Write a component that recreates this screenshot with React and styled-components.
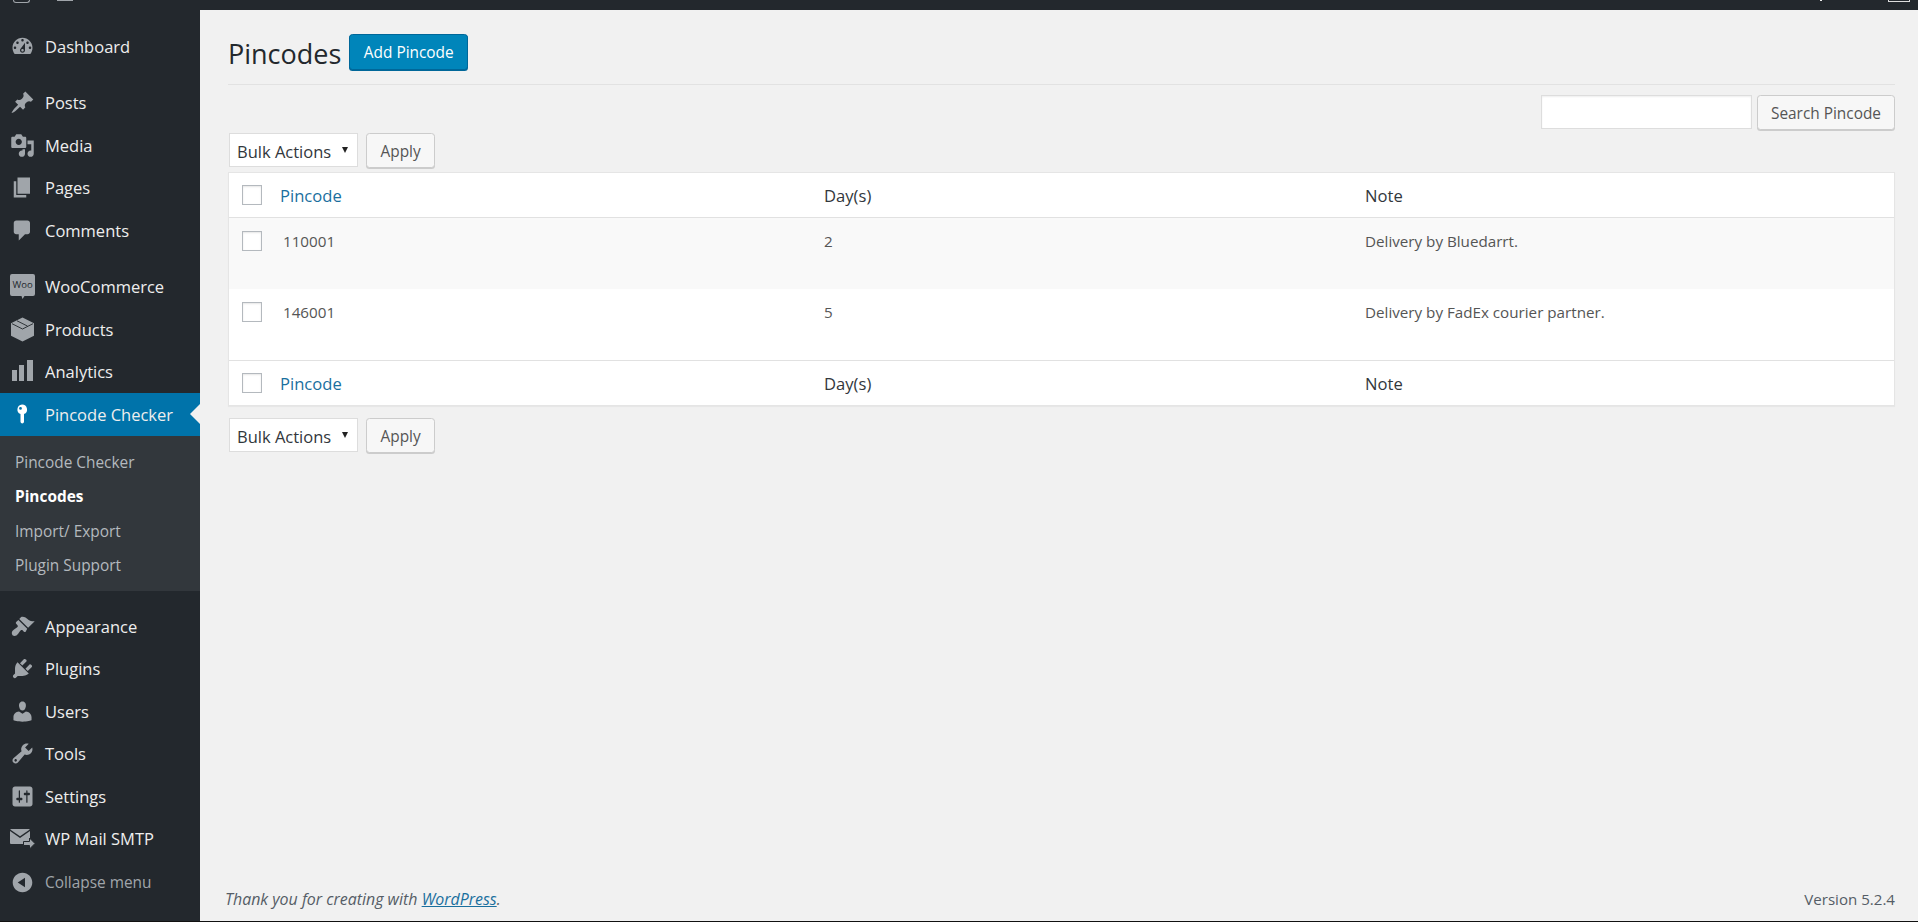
import React from "react";
import styled, { createGlobalStyle } from "styled-components";

const GlobalStyle = createGlobalStyle`
  html, body {
    margin: 0;
    padding: 0;
    background: #f1f1f1;
  }
  * {
    box-sizing: border-box;
  }
`;

const FONT = `"Open Sans", "Noto Sans", sans-serif`;

const Page = styled.div`
  display: flex;
  flex-direction: column;
  width: 1918px;
  height: 922px;
  overflow: hidden;
  font-family: ${FONT};
  border-bottom: 1px solid #111;
`;

const TopBar = styled.div`
  display: flex;
  align-items: flex-start;
  flex: 0 0 10px;
  background: #23282d;
`;
const TopArc = styled.span`
  width: 17px;
  height: 3px;
  margin-left: 13px;
  border: 1px solid #a0a5aa;
  border-top: none;
  border-radius: 0 0 8px 8px;
`;
const TopBlock = styled.span`
  width: 16px;
  height: 1px;
  margin-left: 27px;
  background: #a0a5aa;
`;
const TopTick = styled.span`
  width: 2px;
  height: 1px;
  margin-left: auto;
  background: #eee;
`;
const TopBox = styled.span`
  width: 22px;
  height: 2px;
  margin: 0 8px 0 66px;
  border: 1px solid #ddd;
  border-top: none;
`;

const Body = styled.div`
  display: flex;
  flex: 1;
  min-height: 0;
`;

const Sidebar = styled.nav`
  display: flex;
  flex-direction: column;
  flex: 0 0 200px;
  padding-top: 15px;
  background: #23282d;
`;
const MenuItem = styled.div`
  position: relative;
  display: flex;
  align-items: center;
  height: 42.5px;
  flex: none;
  margin-top: ${(p) => (p.$gap ? p.$gap : 0)}px;
  background: ${(p) => (p.$active ? "#0073aa" : "transparent")};
  color: ${(p) => (p.$muted ? "#a0a5aa" : "#eee")};
  font-size: ${(p) => (p.$muted ? "15.4px" : "16.5px")};
`;
const IconSlot = styled.span`
  display: flex;
  justify-content: center;
  align-items: center;
  flex: 0 0 45px;
  color: ${(p) => (p.$active ? "#fff" : "#a0a5aa")};
  svg {
    display: block;
    width: 25px;
    height: 25px;
    fill: currentColor;
  }
`;
const ActiveNotch = styled.span`
  position: absolute;
  right: 0;
  top: 50%;
  margin-top: -10px;
  border: 10px solid transparent;
  border-left: none;
  border-right-color: #f1f1f1;
`;
const SubMenu = styled.div`
  display: flex;
  flex-direction: column;
  flex: none;
  height: 155.5px;
  padding: 10px 0 0 15px;
  background: #32373c;
`;
const SubItem = styled.div`
  height: 34.5px;
  line-height: 34.5px;
  font-size: 15.4px;
  font-weight: ${(p) => (p.$current ? 700 : 400)};
  color: ${(p) => (p.$current ? "#fff" : "#b4b9be")};
`;

const Main = styled.main`
  display: flex;
  flex-direction: column;
  flex: 1;
  min-width: 0;
  padding: 24px 23px 0 28px;
`;
const Heading = styled.div`
  display: flex;
  align-items: flex-start;
  gap: 8px;
  height: 51px;
  border-bottom: 1px solid #e2e2e2;
`;
const Title = styled.h1`
  margin: 0;
  font-size: 27px;
  font-weight: 400;
  line-height: 39px;
  color: #23282d;
`;
const Button = styled.button`
  height: 35px;
  padding: ${(p) => p.$top || 2}px ${(p) => p.$pad || 13}px 0;
  border: 1px solid #ccc;
  border-radius: 3.5px;
  background: #f7f7f7;
  box-shadow: 0 1px 0 #ccc;
  color: #555;
  font-family: ${FONT};
  font-size: 15.4px;
  line-height: 30px;
  white-space: nowrap;
`;
const PrimaryButton = styled(Button)`
  height: 36px;
  border-color: #006799;
  background: #0085ba;
  box-shadow: 0 1px 0 #006799;
  color: #fff;
`;
const SearchRow = styled.div`
  display: flex;
  justify-content: flex-end;
  gap: 5px;
  margin-top: 10px;
`;
const SearchInput = styled.input`
  width: 211px;
  height: 34px;
  border: 1px solid #ddd;
  background: #fff;
  box-shadow: inset 0 1px 2px rgba(0, 0, 0, 0.07);
  outline: none;
`;
const BulkRow = styled.div`
  display: flex;
  align-items: flex-start;
  gap: 8px;
  margin: ${(p) => p.$top}px 0 0 1px;
`;
const SelectWrap = styled.div`
  position: relative;
  width: 129px;
  height: 34px;
  &::after {
    content: "";
    position: absolute;
    top: 14px;
    right: 10px;
    border: 3.5px solid transparent;
    border-top: 6px solid #222;
    border-bottom: none;
  }
`;
const Select = styled.select`
  appearance: none;
  width: 100%;
  height: 100%;
  padding: 2px 0 0 7px;
  border: 1px solid #ddd;
  border-radius: 0;
  background: #fff;
  color: #32373c;
  font-family: ${FONT};
  font-size: 16.5px;
  outline: none;
`;

const Table = styled.table`
  width: 1667px;
  margin-top: 4px;
  border: 1px solid #e5e5e5;
  border-spacing: 0;
  background: #fff;
  box-shadow: 0 1px 1px rgba(0, 0, 0, 0.04);
  table-layout: fixed;
`;
const Col = styled.col`
  width: ${(p) => p.$width}px;
`;
const HeadCell = styled.th`
  height: 45px;
  padding: 0 10px;
  border-bottom: ${(p) => (p.$foot ? "none" : "1px solid #e1e1e1")};
  border-top: ${(p) => (p.$foot ? "1px solid #e1e1e1" : "none")};
  color: #32373c;
  font-size: 16.6px;
  font-weight: 400;
  text-align: left;
`;
const SortLink = styled.a`
  color: #1a6f9e;
`;
const Row = styled.tr`
  background: ${(p) => (p.$alt ? "#f9f9f9" : "#fff")};
`;
const Cell = styled.td`
  height: 71px;
  padding: ${(p) => (p.$check ? "13px 0 0 13px" : `13px 10px 0 ${p.$pad || 10}px`)};
  vertical-align: top;
  color: #555;
  font-size: 15.2px;
  line-height: 20px;
`;
const HeadCheckCell = styled(HeadCell)`
  padding: 0 0 0 13px;
`;
const Checkbox = styled.span`
  display: block;
  width: 20px;
  height: 20px;
  border: 1px solid #b4b9be;
  background: #fff;
  box-shadow: inset 0 1px 2px rgba(0, 0, 0, 0.1);
`;

const Footer = styled.footer`
  display: flex;
  justify-content: space-between;
  align-items: center;
  margin: auto 0 0 -3px;
  padding-bottom: 12px;
  color: #555d66;
  font-size: 15.1px;
  line-height: 20px;
`;
const Thanks = styled.i`
  font-size: 15.95px;
  a {
    color: #1a6f9e;
    text-decoration: underline;
  }
`;

const paths = {
  dashboard:
    "M3.76 16h12.48c1.1-1.37 1.76-3.11 1.76-5 0-4.42-3.58-8-8-8s-8 3.58-8 8c0 1.89.66 3.63 1.76 5zM10 4c.55 0 1 .45 1 1s-.45 1-1 1-1-.45-1-1 .45-1 1-1zM6 6c.55 0 1 .45 1 1s-.45 1-1 1-1-.45-1-1 .45-1 1-1zm8 0c.55 0 1 .45 1 1s-.45 1-1 1-1-.45-1-1 .45-1 1-1zm-5.37 5.55L12 7v6c0 1.1-.9 2-2 2s-2-.9-2-2c0-.57.24-1.08.63-1.45zM4 10c.55 0 1 .45 1 1s-.45 1-1 1-1-.45-1-1 .45-1 1-1zm12 0c.55 0 1 .45 1 1s-.45 1-1 1-1-.45-1-1 .45-1 1-1zm-5 3c0-.55-.45-1-1-1s-1 .45-1 1 .45 1 1 1 1-.45 1-1z",
  posts:
    "M10.44 3.02l1.82-1.82 6.36 6.35-1.83 1.82c-1.05-.68-2.48-.57-3.41.36l-.75.75c-.92.93-1.04 2.35-.35 3.41l-1.83 1.82-2.41-2.41-2.8 2.79c-.42.42-3.38 2.71-3.8 2.29s1.86-3.39 2.28-3.81l2.79-2.79L4.1 9.36l1.83-1.82c1.05.69 2.48.57 3.4-.36l.75-.75c.93-.92 1.05-2.35.36-3.41z",
  media:
    "M13 11V4c0-.55-.45-1-1-1h-1.67L9 1H5L3.67 3H2c-.55 0-1 .45-1 1v7c0 .55.45 1 1 1h10c.55 0 1-.45 1-1zM7 4.5c1.38 0 2.5 1.12 2.5 2.5S8.38 9.5 7 9.5 4.5 8.38 4.5 7 5.62 4.5 7 4.5zM14 6h5v10.5c0 1.38-1.12 2.5-2.5 2.5S14 17.88 14 16.5s1.12-2.5 2.5-2.5c.17 0 .34.02.5.05V9h-3V6zm-4 8.05V13h2v3.5c0 1.38-1.12 2.5-2.5 2.5S7 17.88 7 16.5 8.12 14 9.5 14c.17 0 .34.02.5.05z",
  pages: "M6 15V2h10v13H6zm-1 1h8v2H3V5h2v11z",
  comments:
    "M5 2h9c1.1 0 2 .9 2 2v7c0 1.1-.9 2-2 2h-2l-5 5v-5H5c-1.1 0-2-.9-2-2V4c0-1.1.9-2 2-2z",
  appearance:
    "M14.48 11.06L7.41 3.99l1.5-1.5c.5-.56 2.3-.47 3.51.32 1.21.8 1.43 1.28 2.91 2.1 1.18.64 2.45 1.26 4.45.85zm-.71.71L6.7 4.7 4.93 6.47c-.39.39-.39 1.02 0 1.41l1.06 1.06c.39.39.39 1.03 0 1.42-.6.6-1.43 1.11-2.21 1.69-.35.26-.7.53-1.01.84C1.43 13.71.96 15.65 2 17c1.35 1.04 3.29.57 4.11-.73.31-.31.58-.66.84-1.01.58-.78 1.09-1.61 1.69-2.21.39-.39 1.03-.39 1.42 0l1.06 1.06c.39.39 1.02.39 1.41 0z",
  plugins:
    "M13.11 4.36L9.87 7.6 8 5.73l3.24-3.24c.35-.34 1.05-.2 1.56.32.52.51.66 1.21.31 1.55zm-8 1.77l.91-1.12 9.01 9.01-1.19.84c-.71.71-2.63 1.16-3.82 1.16H6.14L4.9 17.26c-.59.59-1.54.59-2.12 0-.59-.58-.59-1.53 0-2.12l1.24-1.24v-3.88c0-1.13.4-3.19 1.09-3.89zm7.26 3.97l3.24-3.24c.34-.35 1.04-.21 1.55.31.52.51.66 1.21.31 1.55l-3.24 3.25z",
  users:
    "M10 9.25c-2.27 0-2.73-3.44-2.73-3.44C7 4.02 7.82 2 9.97 2c2.16 0 2.98 2.02 2.71 3.81 0 0-.41 3.44-2.68 3.44zm0 2.57L12.72 10c2.39 0 4.52 2.33 4.52 4.53v2.49s-3.65 1.13-7.24 1.13c-3.65 0-7.24-1.13-7.24-1.13v-2.49c0-2.25 1.94-4.48 4.47-4.48z",
  tools:
    "M16.68 9.77c-1.34 1.34-3.3 1.67-4.95.99l-5.41 6.52c-.99.99-2.59.99-3.58 0s-.99-2.59 0-3.57l6.52-5.42c-.68-1.65-.35-3.61.99-4.95 1.28-1.28 3.12-1.62 4.72-1.06l-2.89 2.89 2.82 2.82 2.86-2.87c.53 1.58.18 3.39-1.08 4.65zM3.81 16.21c.4.39 1.04.39 1.43 0 .4-.4.4-1.04 0-1.43-.39-.4-1.03-.4-1.43 0-.39.39-.39 1.03 0 1.43z",
  settings:
    "M18 16V4c0-1.1-.9-2-2-2H4c-1.1 0-2 .9-2 2v12c0 1.1.9 2 2 2h12c1.1 0 2-.9 2-2zM8 11h1c.55 0 1 .45 1 1s-.45 1-1 1H8v1.5c0 .28-.22.5-.5.5s-.5-.22-.5-.5V13H6c-.55 0-1-.45-1-1s.45-1 1-1h1V5.5c0-.28.22-.5.5-.5s.5.22.5.5V11zm5-2h-1c-.55 0-1-.45-1-1s.45-1 1-1h1V5.5c0-.28.22-.5.5-.5s.5.22.5.5V7h1c.55 0 1 .45 1 1s-.45 1-1 1h-1v5.5c0 .28-.22.5-.5.5s-.5-.22-.5-.5V9z",
  collapse:
    "M10 2.16c4.33 0 7.84 3.51 7.84 7.84s-3.51 7.84-7.84 7.84S2.16 14.33 2.16 10 5.71 2.16 10 2.16zm2 11.72V6.12L6.18 9.97z",
};

const DashIcon = ({ name }) => (
  <svg viewBox="0 0 20 20" fillRule="evenodd">
    <path d={paths[name]} />
  </svg>
);

const WooIcon = () => (
  <svg viewBox="0 0 25 25">
    <path d="M2 0h21a2 2 0 0 1 2 2v18a2 2 0 0 1-2 2h-8.5l-2 3-1-3H2a2 2 0 0 1-2-2V2a2 2 0 0 1 2-2z" />
    <text x="12.5" y="14" fontFamily={FONT} fontSize="9.5" textAnchor="middle" fill="#23282d">
      Woo
    </text>
  </svg>
);

const BoxIcon = () => (
  <svg viewBox="0 0 25 25">
    <path d="M12.5.5 24 6.2v12.6L12.5 24.5 1 18.8V6.2z" />
    <path
      d="M2 6.7l10.5 5.3L23 6.7M7 3.8l10.5 5.3"
      fill="none"
      stroke="#23282d"
      strokeWidth="0.9"
    />
  </svg>
);

const BarsIcon = () => (
  <svg viewBox="0 0 25 25">
    <path d="M2 14h5v11H2zM9 9h5v16H9zM17 4h6v21h-6z" transform="translate(0 -3)" />
  </svg>
);

const KeyIcon = () => (
  <svg viewBox="0 0 25 25" fillRule="evenodd">
    <path d="M12 2.5a5 5 0 0 1 2 9.6V20a1.8 1.8 0 0 1-3.5 0v-7.9a5 5 0 0 1 1.5-9.6zM10.5 5a1.4 1.4 0 1 0 0 2.8 1.4 1.4 0 0 0 0-2.8z" />
  </svg>
);

const MailIcon = () => (
  <svg viewBox="0 0 25 25">
    <path d="M1 3h18a1 1 0 0 1 .8.4L10 10.2.2 3.4A1 1 0 0 1 1 3z" />
    <path d="M0 5l10 7 10-7v12a1 1 0 0 1-1 1H1a1 1 0 0 1-1-1z" />
    <path
      d="M13.5 15.5h6V12l5.5 5.5-5.5 5.5v-3.5h-6z"
      stroke="#23282d"
      strokeWidth="1"
    />
  </svg>
);

const topMenus = [
  { label: "Dashboard", icon: <DashIcon name="dashboard" /> },
  { label: "Posts", icon: <DashIcon name="posts" />, gap: 14 },
  { label: "Media", icon: <DashIcon name="media" /> },
  { label: "Pages", icon: <DashIcon name="pages" /> },
  { label: "Comments", icon: <DashIcon name="comments" /> },
  { label: "WooCommerce", icon: <WooIcon />, gap: 14 },
  { label: "Products", icon: <BoxIcon /> },
  { label: "Analytics", icon: <BarsIcon /> },
];

const bottomMenus = [
  { label: "Appearance", icon: <DashIcon name="appearance" />, gap: 14 },
  { label: "Plugins", icon: <DashIcon name="plugins" /> },
  { label: "Users", icon: <DashIcon name="users" /> },
  { label: "Tools", icon: <DashIcon name="tools" /> },
  { label: "Settings", icon: <DashIcon name="settings" /> },
  { label: "WP Mail SMTP", icon: <MailIcon /> },
];

const renderMenu = (m) => (
  <MenuItem key={m.label} $gap={m.gap}>
    <IconSlot>{m.icon}</IconSlot>
    {m.label}
  </MenuItem>
);

const pincodes = [
  { code: "110001", days: "2", note: "Delivery by Bluedarrt.", alt: true },
  { code: "146001", days: "5", note: "Delivery by FadEx courier partner." },
];

const BulkActions = ({ top }) => (
  <BulkRow $top={top}>
    <SelectWrap>
      <Select defaultValue="bulk">
        <option value="bulk">Bulk Actions</option>
      </Select>
    </SelectWrap>
    <Button $pad={13.5} $top={3}>
      Apply
    </Button>
  </BulkRow>
);

const App = () => {
  return (
    <Page>
      <GlobalStyle />
      <TopBar>
        <TopArc />
        <TopBlock />
        <TopTick />
        <TopBox />
      </TopBar>
      <Body>
        <Sidebar>
          {topMenus.map(renderMenu)}
          <MenuItem $active>
            <IconSlot $active>
              <KeyIcon />
            </IconSlot>
            Pincode Checker
            <ActiveNotch />
          </MenuItem>
          <SubMenu>
            <SubItem>Pincode Checker</SubItem>
            <SubItem $current>Pincodes</SubItem>
            <SubItem>Import/ Export</SubItem>
            <SubItem>Plugin Support</SubItem>
          </SubMenu>
          {bottomMenus.map(renderMenu)}
          <MenuItem $muted $gap={1}>
            <IconSlot>
              <DashIcon name="collapse" />
            </IconSlot>
            Collapse menu
          </MenuItem>
        </Sidebar>
        <Main>
          <Heading>
            <Title>Pincodes</Title>
            <PrimaryButton $pad={13.5}>Add Pincode</PrimaryButton>
          </Heading>
          <SearchRow>
            <SearchInput />
            <Button>Search Pincode</Button>
          </SearchRow>
          <BulkActions top={3} />
          <Table>
            <colgroup>
              <Col $width={41} />
              <Col $width={544} />
              <Col $width={541} />
              <col />
            </colgroup>
            <thead>
              <tr>
                <HeadCheckCell>
                  <Checkbox />
                </HeadCheckCell>
                <HeadCell>
                  <SortLink>Pincode</SortLink>
                </HeadCell>
                <HeadCell>Day(s)</HeadCell>
                <HeadCell>Note</HeadCell>
              </tr>
            </thead>
            <tbody>
              {pincodes.map((p) => (
                <Row key={p.code} $alt={p.alt}>
                  <Cell $check>
                    <Checkbox />
                  </Cell>
                  <Cell $pad={13}>{p.code}</Cell>
                  <Cell>{p.days}</Cell>
                  <Cell>{p.note}</Cell>
                </Row>
              ))}
            </tbody>
            <tfoot>
              <tr>
                <HeadCheckCell $foot>
                  <Checkbox />
                </HeadCheckCell>
                <HeadCell $foot>
                  <SortLink>Pincode</SortLink>
                </HeadCell>
                <HeadCell $foot>Day(s)</HeadCell>
                <HeadCell $foot>Note</HeadCell>
              </tr>
            </tfoot>
          </Table>
          <BulkActions top={12} />
          <Footer>
            <Thanks>
              Thank you for creating with <a>WordPress</a>.
            </Thanks>
            <span>Version 5.2.4</span>
          </Footer>
        </Main>
      </Body>
    </Page>
  );
};

export default App;
